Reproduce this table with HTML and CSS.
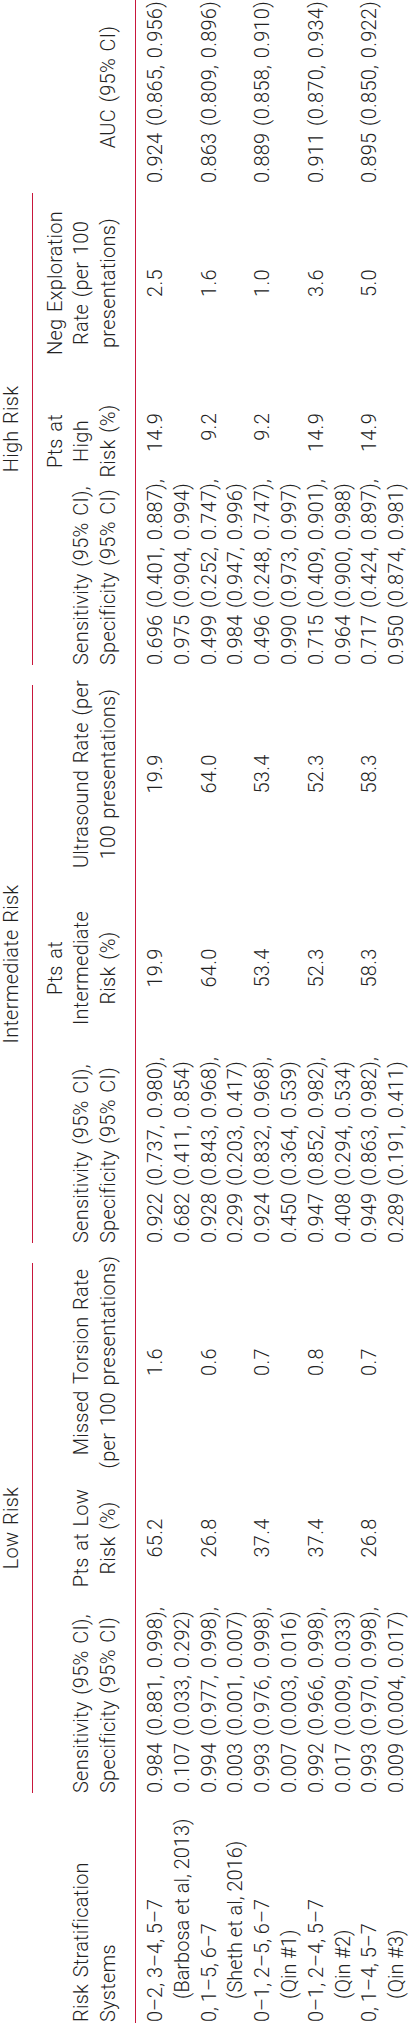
FILE: index.html
```html
<!DOCTYPE html>
<html lang="en">
<head>
<meta charset="utf-8">
<title>Risk Stratification Systems</title>
<link rel="stylesheet" href="styles.css">
</head>
<body>
<div class="page">
  <div class="table">
    <!-- group header row -->
    <div class="gcell"></div>
    <div class="gcell grp"><div class="grp-in">Low Risk</div></div>
    <div class="gcell grp"><div class="grp-in">Intermediate Risk</div></div>
    <div class="gcell grp"><div class="grp-in">High Risk</div></div>
    <div class="gcell"></div>

    <!-- column header row -->
    <div class="th c1"><div class="tx">Risk Stratification<br>Systems</div></div>
    <div class="th lft"><div class="tx">Sensitivity (95% CI),<br>Specificity (95% CI)</div></div>
    <div class="th ctr"><div class="tx">Pts at Low<br>Risk (%)</div></div>
    <div class="th ctr c4"><div class="tx">Missed Torsion Rate<br>(per 100 presentations)</div></div>
    <div class="th lft"><div class="tx">Sensitivity (95% CI),<br>Specificity (95% CI)</div></div>
    <div class="th ctr"><div class="tx">Pts at<br>Intermediate<br>Risk (%)</div></div>
    <div class="th ctr c7"><div class="tx">Ultrasound Rate (per<br>100 presentations)</div></div>
    <div class="th lft"><div class="tx">Sensitivity (95% CI),<br>Specificity (95% CI)</div></div>
    <div class="th ctr c9h"><div class="tx">Pts at<br>High<br>Risk (%)</div></div>
    <div class="th ctr"><div class="tx">Neg Exploration<br>Rate (per 100<br>presentations)</div></div>
    <div class="th ctr c11h"><div class="tx">AUC (95% CI)</div></div>

    <!-- row 1 -->
    <div class="td c1"><div>0–2, 3–4, 5–7</div><div class="ref">(Barbosa et al, 2013)</div></div>
    <div class="td lft">0.984 (0.881, 0.998),<br>0.107 (0.033, 0.292)</div>
    <div class="td ctr">65.2</div>
    <div class="td ctr c4">1.6</div>
    <div class="td lft">0.922 (0.737, 0.980),<br>0.682 (0.411, 0.854)</div>
    <div class="td ctr">19.9</div>
    <div class="td ctr c7">19.9</div>
    <div class="td lft">0.696 (0.401, 0.887),<br>0.975 (0.904, 0.994)</div>
    <div class="td rgt c9d">14.9</div>
    <div class="td ctr">2.5</div>
    <div class="td ctr c11d">0.924 (0.865, 0.956)</div>

    <!-- row 2 -->
    <div class="td c1"><div>0, 1–5, 6–7</div><div class="ref">(Sheth et al, 2016)</div></div>
    <div class="td lft">0.994 (0.977, 0.998),<br>0.003 (0.001, 0.007)</div>
    <div class="td ctr">26.8</div>
    <div class="td ctr c4">0.6</div>
    <div class="td lft">0.928 (0.843, 0.968),<br>0.299 (0.203, 0.417)</div>
    <div class="td ctr">64.0</div>
    <div class="td ctr c7">64.0</div>
    <div class="td lft">0.499 (0.252, 0.747),<br>0.984 (0.947, 0.996)</div>
    <div class="td rgt c9d">9.2</div>
    <div class="td ctr">1.6</div>
    <div class="td ctr c11d">0.863 (0.809, 0.896)</div>

    <!-- row 3 -->
    <div class="td c1"><div>0–1, 2–5, 6–7</div><div class="ref">(Qin #1)</div></div>
    <div class="td lft">0.993 (0.976, 0.998),<br>0.007 (0.003, 0.016)</div>
    <div class="td ctr">37.4</div>
    <div class="td ctr c4">0.7</div>
    <div class="td lft">0.924 (0.832, 0.968),<br>0.450 (0.364, 0.539)</div>
    <div class="td ctr">53.4</div>
    <div class="td ctr c7">53.4</div>
    <div class="td lft">0.496 (0.248, 0.747),<br>0.990 (0.973, 0.997)</div>
    <div class="td rgt c9d">9.2</div>
    <div class="td ctr">1.0</div>
    <div class="td ctr c11d">0.889 (0.858, 0.910)</div>

    <!-- row 4 -->
    <div class="td c1"><div>0–1, 2–4, 5–7</div><div class="ref">(Qin #2)</div></div>
    <div class="td lft">0.992 (0.966, 0.998),<br>0.017 (0.009, 0.033)</div>
    <div class="td ctr">37.4</div>
    <div class="td ctr c4">0.8</div>
    <div class="td lft">0.947 (0.852, 0.982),<br>0.408 (0.294, 0.534)</div>
    <div class="td ctr">52.3</div>
    <div class="td ctr c7">52.3</div>
    <div class="td lft">0.715 (0.409, 0.901),<br>0.964 (0.900, 0.988)</div>
    <div class="td rgt c9d">14.9</div>
    <div class="td ctr">3.6</div>
    <div class="td ctr c11d">0.911 (0.870, 0.934)</div>

    <!-- row 5 -->
    <div class="td c1"><div>0, 1–4, 5–7</div><div class="ref">(Qin #3)</div></div>
    <div class="td lft">0.993 (0.970, 0.998),<br>0.009 (0.004, 0.017)</div>
    <div class="td ctr">26.8</div>
    <div class="td ctr c4">0.7</div>
    <div class="td lft">0.949 (0.863, 0.982),<br>0.289 (0.191, 0.411)</div>
    <div class="td ctr">58.3</div>
    <div class="td ctr c7">58.3</div>
    <div class="td lft">0.717 (0.424, 0.897),<br>0.950 (0.874, 0.981)</div>
    <div class="td rgt c9d">14.9</div>
    <div class="td ctr">5.0</div>
    <div class="td ctr c11d">0.895 (0.850, 0.922)</div>
  </div>
</div>
</body>
</html>
```

FILE: styles.css
```css
html, body {
  margin: 0;
  padding: 0;
  background: #ffffff;
}

.page {
  width: 414px;
  height: 2023px;
  overflow: hidden;
}

/* The table is laid out horizontally and turned a quarter turn
   counter-clockwise so that it reads bottom-to-top. */
.table {
  width: 2040px;
  transform-origin: 0 0;
  transform: translateY(2023px) rotate(-90deg);
  display: grid;
  grid-template-columns: 220px 210px 110px 230px 210px 150px 218px 182px 110px 200px 200px;
  font-family: Roboto, "Liberation Sans", sans-serif;
  font-weight: 300;
  font-size: 20px;
  line-height: 26.8px;
  letter-spacing: 0.25px;
  word-spacing: 1.5px;
  color: #222222;
  white-space: nowrap;
}

/* group header row */
.grp {
  grid-column: span 3;
  padding: 0 10px;
}

.grp-in {
  margin-top: -2px;
  padding-bottom: 7.6px;
  border-bottom: 1px solid #c8173c;
  text-align: center;
}

/* column header row */
.th {
  display: flex;
  flex-direction: column;
  justify-content: flex-end;
  padding-top: 8.3px;
  padding-bottom: 12.5px;
  border-bottom: 1px solid #c8173c;
  margin-bottom: 6.5px;
}

.th.lft {
  align-items: flex-start;
  padding-left: 10px;
}

.th.ctr {
  align-items: center;
  text-align: center;
}

.th.c1 {
  align-items: flex-start;
  padding-left: 1px;
}

/* body cells */
.td.c1 {
  padding-left: 1px;
  word-spacing: 0;
  letter-spacing: 0;
}

.ref {
  padding-left: 23px;
}

.td.lft {
  padding-left: 10px;
}

.td.ctr {
  text-align: center;
}

.td.rgt {
  text-align: right;
}

/* per-column offsets */
.c4 {
  padding-left: 12px;
}

.c7 {
  padding-left: 20px;
}

.c9h {
  padding-right: 6px;
}

.c9d {
  padding-right: 30px;
}

.c11h {
  padding-right: 8px;
}

.c11d {
  padding-right: 20px;
}
```
